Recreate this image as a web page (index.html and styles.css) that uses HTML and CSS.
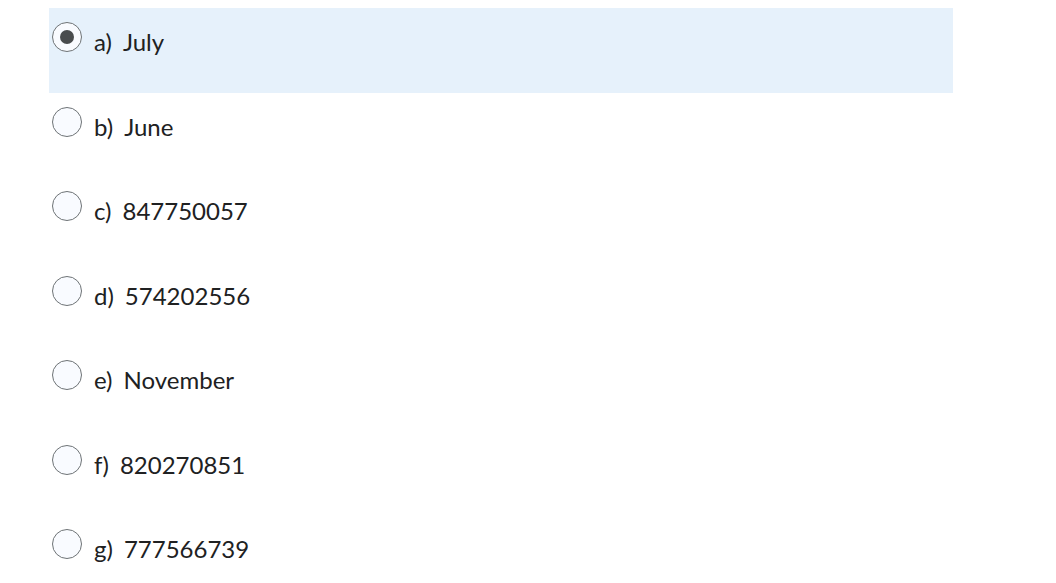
FILE: index.html
```html
<!DOCTYPE html>
<html lang="en">
<head>
    <meta charset="UTF-8">
    <title>Question</title>
    <link rel="stylesheet" href="styles.css">
</head>
<body>
    <div class="choices">
        <label class="choice selected">
            <span class="radio"></span>
            <span class="letter">a)</span>
            <span class="text">July</span>
        </label>
        <label class="choice">
            <span class="radio"></span>
            <span class="letter">b)</span>
            <span class="text">June</span>
        </label>
        <label class="choice">
            <span class="radio"></span>
            <span class="letter">c)</span>
            <span class="text">847750057</span>
        </label>
        <label class="choice">
            <span class="radio"></span>
            <span class="letter">d)</span>
            <span class="text">574202556</span>
        </label>
        <label class="choice">
            <span class="radio"></span>
            <span class="letter">e)</span>
            <span class="text">November</span>
        </label>
        <label class="choice">
            <span class="radio"></span>
            <span class="letter">f)</span>
            <span class="text">820270851</span>
        </label>
        <label class="choice">
            <span class="radio"></span>
            <span class="letter">g)</span>
            <span class="text">777566739</span>
        </label>
    </div>
</body>
</html>
```

FILE: styles.css
```css
* {
    margin: 0;
    padding: 0;
    box-sizing: border-box;
}
body {
    font-family: Lato, "Liberation Sans", sans-serif;
    color: #202122;
    background: #fff;
    padding: 8px 0 0 49px;
}
.choices {
    width: 904px;
}
.choice {
    display: flex;
    align-items: flex-start;
    height: 84.5px;
    padding: 14px 0 0 3px;
    font-size: 24px;
    cursor: pointer;
}
.choice.selected {
    background-color: #e6f1fb;
}
.radio {
    position: relative;
    flex: none;
    width: 30px;
    height: 30px;
    border: 1px solid #6e7376;
    border-radius: 50%;
    background-color: #f9fbff;
}
.selected .radio::after {
    content: "";
    position: absolute;
    left: 7px;
    top: 7px;
    width: 14px;
    height: 14px;
    border-radius: 50%;
    background-color: #494c4e;
}
.letter {
    margin: 6px 0 0 12px;
    line-height: 28px;
}
.text {
    margin: 6px 0 0 11px;
    line-height: 28px;
}
```
